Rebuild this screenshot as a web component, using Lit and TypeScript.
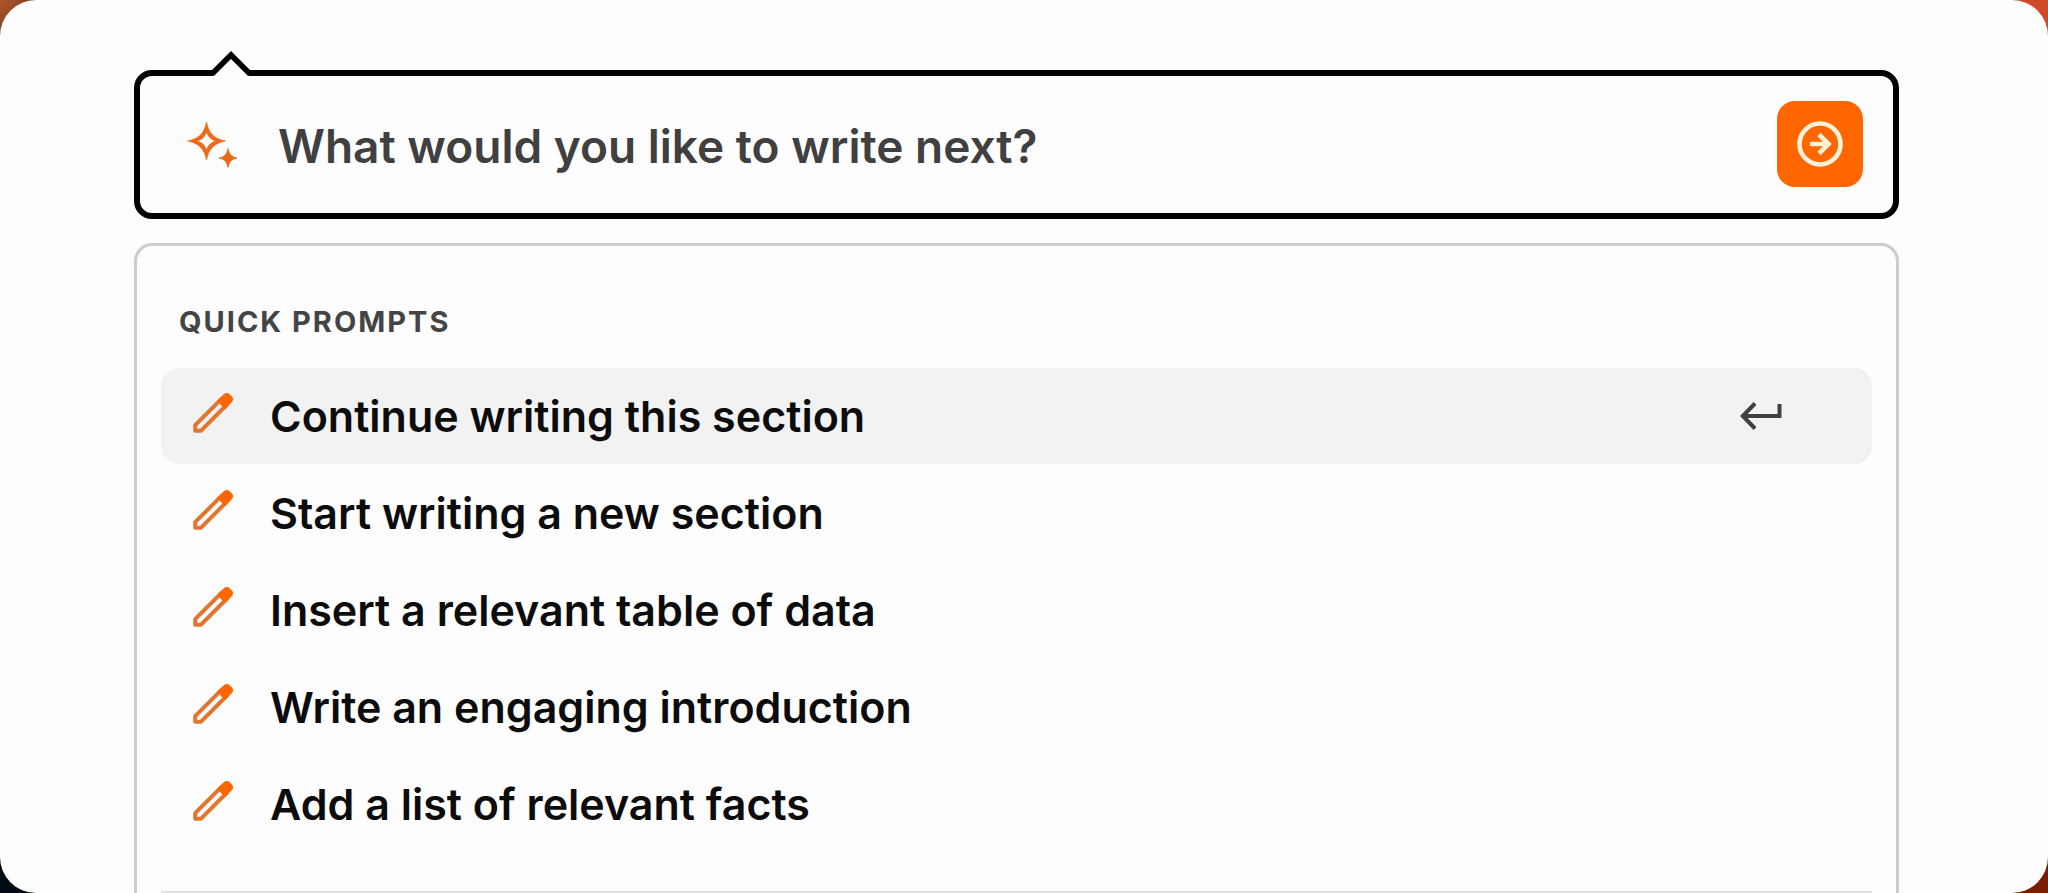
import { LitElement, html, css, svg } from "lit";
import { customElement, property, state } from "lit/decorators.js";

const sparkles = svg`<svg class="sparkles" viewBox="0 0 52 48" aria-hidden="true">
  <path d="M20.500 2C23 13.500 28 18.500 39.500 21C28 23.500 23 28.500 20.500 40C18 28.500 13 23.500 1.500 21C13 18.500 18 13.500 20.500 2ZM20.500 12C18.700 17 16.500 19.200 11.500 21C16.500 22.800 18.700 25 20.500 30C22.300 25 24.500 22.800 29.500 21C24.500 19.200 22.300 17 20.500 12Z" fill="currentColor" fill-rule="evenodd" stroke="currentColor" stroke-width=".6" stroke-linejoin="round"/>
  <path d="M42 28.500C43.500 34.500 45 36.500 51 38C45 39.500 43.500 41.500 42 47.500C40.500 41.500 39 39.500 33 38C39 36.500 40.500 34.500 42 28.500Z" fill="currentColor" stroke="currentColor" stroke-width=".8"/>
</svg>`;

const arrowCircle = svg`<svg class="arrow" viewBox="0 0 46 46" aria-hidden="true" fill="none" stroke="currentColor" stroke-width="4.600">
  <circle cx="23" cy="23" r="20.500"/>
  <path d="M13 23H32M22 13.500L31.500 23L22 32.500"/>
</svg>`;

const pencil = svg`<svg class="pencil" viewBox="0 0 42 42" aria-hidden="true">
  <path d="M3.200 38.800V33.200L29.500 6.900L35.100 12.500L8.800 38.800Z" fill="none" stroke="currentColor" stroke-width="4" stroke-linejoin="round"/>
  <path class="tip" d="M25 9L32 2Q34.900 -.3 37.700 2.300L39.700 4.300Q42.300 7.100 40 10L33 17Z"/>
</svg>`;

const returnKey = svg`<svg class="return" viewBox="0 0 42 28" aria-hidden="true" fill="none" stroke="currentColor" stroke-width="4">
  <path d="M39.500 2V14H3M15 1.500L2.800 14L15 26.500"/>
</svg>`;

@customElement("prompt-bar")
export class PromptBar extends LitElement {
  static styles = css`
    :host { display: block; }
    .bar {
      position: relative;
      display: flex;
      align-items: center;
      gap: 40px;
      box-sizing: border-box;
      padding: 25px 30px 26px 46px;
      border: 6px solid #000;
      border-radius: 18px;
      background: #fdfdfd;
    }
    .pointer {
      position: absolute;
      left: 72px;
      top: -25px;
      width: 38px;
      height: 26px;
    }
    .sparkles { flex: none; width: 52px; height: 48px; color: #ec6a17; }
    .input {
      flex: 1;
      min-width: 0;
      padding: 4px 0 0;
      border: 0;
      outline: 0;
      background: transparent;
      font: 600 46px/60px Inter, "Liberation Sans", sans-serif;
      color: #404040;
    }
    .input::placeholder { color: #404040; opacity: 1; }
    .send {
      flex: none;
      display: grid;
      place-items: center;
      width: 86px;
      height: 86px;
      padding: 0;
      border: 0;
      border-radius: 18px;
      background: #ff6600;
      color: #fff0d8;
    }
    .arrow { width: 46px; height: 46px; }
  `;

  render() {
    return html`<form class="bar" @submit=${(e: Event) => e.preventDefault()}>
      <svg class="pointer" viewBox="0 0 38 26" aria-hidden="true">
        <path d="M0 26L19 6L38 26Z" fill="#fdfdfd"/>
        <path d="M0 23L19 4L38 23" fill="none" stroke="#000" stroke-width="5.500"/>
      </svg>
      ${sparkles}
      <input class="input" type="text" aria-label="Prompt" placeholder="What would you like to write next?" />
      <button class="send" type="submit" aria-label="Send">${arrowCircle}</button>
    </form>`;
  }
}

@customElement("prompt-item")
export class PromptItem extends LitElement {
  @property() label = "";
  @property({ type: Boolean }) active = false;

  static styles = css`
    :host { display: block; }
    .item {
      display: flex;
      align-items: center;
      gap: 36px;
      box-sizing: border-box;
      width: 100%;
      height: 96px;
      padding: 0 90px 0 31px;
      border: 0;
      border-radius: 18px;
      background: transparent;
      font: 600 43px/56px Inter, "Liberation Sans", sans-serif;
      color: #0c0c0c;
      text-align: left;
    }
    .active { background: #f2f2f2; }
    .pencil { flex: none; width: 42px; height: 42px; margin-bottom: 6px; color: #e0762f; }
    .tip { fill: #ff6600; }
    .text { flex: 1; }
    .return { flex: none; width: 42px; height: 28px; color: #404040; }
  `;

  render() {
    return html`<button class="item ${this.active ? "active" : ""}" type="button">
      ${pencil}<span class="text">${this.label}</span>${this.active ? returnKey : ""}
    </button>`;
  }
}

@customElement("app-root")
export class AppRoot extends LitElement {
  @state() private selected = 0;

  private prompts = [
    "Continue writing this section",
    "Start writing a new section",
    "Insert a relevant table of data",
    "Write an engaging introduction",
    "Add a list of relevant facts",
  ];

  static styles = css`
    :host {
      display: block;
      height: 100vh;
      overflow: hidden;
      background:
        radial-gradient(circle at 0 0, #b0562a, transparent 120px),
        radial-gradient(circle at 100% 0, #d04a28 60px, transparent 160px),
        radial-gradient(circle at 100% 100%, #7a1c02 60px, transparent 160px),
        #020b14;
    }
    .page {
      display: flex;
      flex-direction: column;
      gap: 24px;
      box-sizing: border-box;
      height: 100%;
      overflow: hidden;
      padding: 70px 149px 0 134px;
      border-radius: 36px;
      background: #fdfdfd;
    }
    .menu {
      flex: none;
      padding: 52px 24px 60px;
      border: 3px solid #ccc;
      border-radius: 18px;
    }
    .heading {
      margin: 0 0 22px;
      padding: 0 18px;
      font: 700 29px/48px Inter, "Liberation Sans", sans-serif;
      letter-spacing: 2px;
      text-transform: uppercase;
      color: #444;
    }
    .list { display: grid; gap: 1px; margin: 0; padding: 0; list-style: none; }
    .divider { height: 3px; margin: 39px 0 0; border: 0; background: #e0e0e0; }
  `;

  render() {
    return html`<main class="page">
      <prompt-bar></prompt-bar>
      <section class="menu" aria-labelledby="quick">
        <h2 class="heading" id="quick">Quick prompts</h2>
        <ul class="list">
          ${this.prompts.map((p, i) => html`<li>
            <prompt-item .label=${p} ?active=${i === this.selected}
              @mouseenter=${() => (this.selected = i)}></prompt-item>
          </li>`)}
        </ul>
        <hr class="divider" />
      </section>
    </main>`;
  }
}
